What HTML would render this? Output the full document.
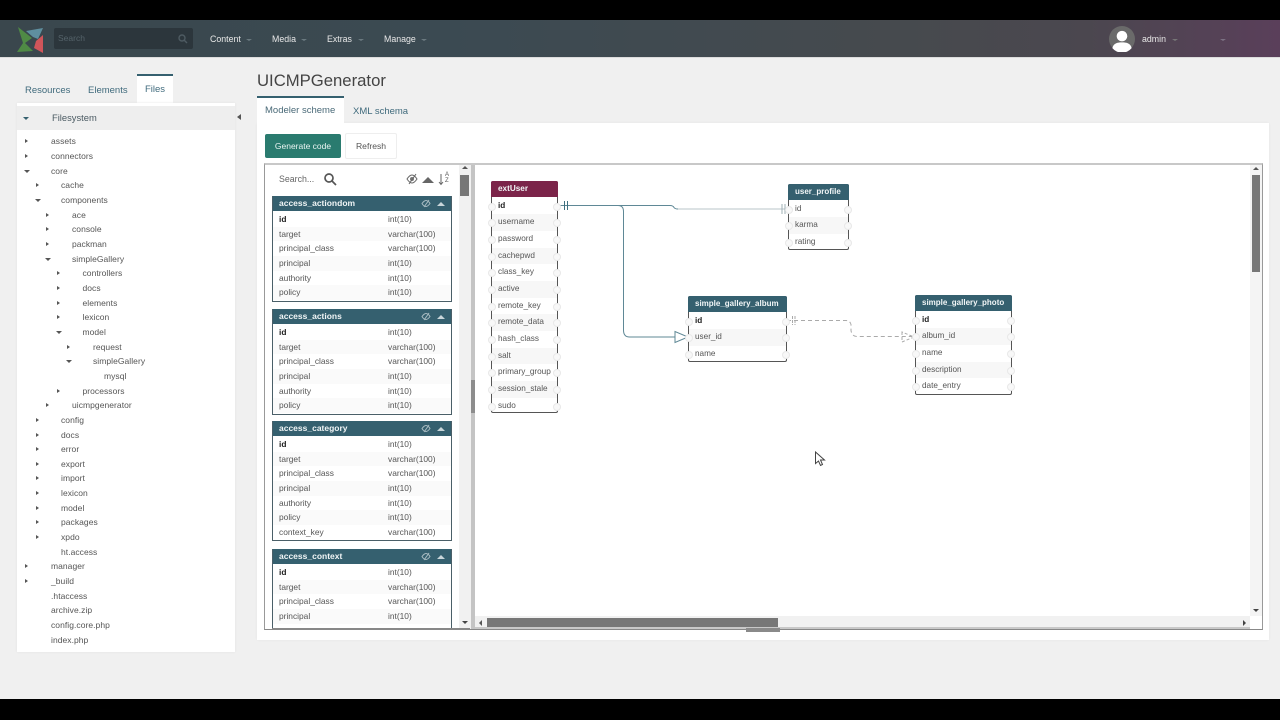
<!DOCTYPE html>
<html><head><meta charset="utf-8"><title>UICMPGenerator</title>
<style>
*{box-sizing:border-box;margin:0;padding:0}
html,body{width:1280px;height:720px;overflow:hidden;background:#f0f0f0;font-family:"Liberation Sans",sans-serif;color:#444}
body{filter:blur(.35px)}
.a{position:absolute}
.blk{position:absolute;left:0;width:1280px;background:#000}
#hd{position:absolute;left:0;top:20px;width:1280px;height:37px;background:linear-gradient(90deg,#3a474d 0%,#3b4a52 35%,#464a4e 70%,#4b474f 85%,#5a3f5a 100%)}
.nav{position:absolute;top:34px;font-size:8.8px;line-height:12px;color:#e8e8e8}
.car{position:absolute;width:0;height:0;border-left:3px solid transparent;border-right:3px solid transparent;border-top:2px solid #6b7a80}
.tab{position:absolute;font-size:9.5px;line-height:14px;color:#3f6a7c}
#tree{position:absolute;left:17px;top:134.4px;width:218px;list-style:none;font-size:8.5px;line-height:14.67px;color:#555;letter-spacing:.05px}
#tree li{position:relative;height:14.67px;white-space:nowrap}
#tree li.r::before,#tree li.d::before{content:"";position:absolute;width:0;height:0}
#tree li.r::before{top:5px;border-top:2.5px solid transparent;border-bottom:2.5px solid transparent;border-left:3.5px solid #555;margin-left:1px}
#tree li.d::before{top:6px;border-left:3px solid transparent;border-right:3px solid transparent;border-top:3.5px solid #555}
.l0{padding-left:34px}.l0::before{left:7px}
.l1{padding-left:44px}.l1::before{left:18px}
.l2{padding-left:55px}.l2::before{left:28px}
.l3{padding-left:65.5px}.l3::before{left:39px}
.l4{padding-left:76px}.l4::before{left:49px}
.l5{padding-left:87px}
.ls{position:absolute;left:272px;width:180px;background:#fff;border:1px solid #4a5f68;border-top:0;overflow:hidden}
.ls h4{background:#35606f;color:#f2f6f7;font-size:8.5px;font-weight:bold;line-height:15px;height:15px;margin:0 -1px;padding-left:7px}
.ct h4{background:#35606f;color:#f2f6f7;font-size:8px;font-weight:bold;white-space:nowrap;padding-left:7px}
.ls p{height:14.65px;line-height:14.65px;font-size:8.4px;color:#555;padding-left:6px;position:relative}
.ls p:first-of-type{margin-top:1px;color:#222;font-weight:bold}
.ls p span{position:absolute;left:115px;top:0;color:#555;font-weight:normal}
.ls p:nth-of-type(even){background:#fafafa}
.ct{position:absolute;background:#fff;border:1px solid #555;border-top:0;border-radius:2px}
.ct h4{height:16px;line-height:16px;border-radius:2px 2px 0 0;margin:0 -1px}
.ct p{height:16.67px;line-height:16.67px;font-size:8.2px;color:#555;padding-left:6px;position:relative;white-space:nowrap}
.ct p:first-of-type{color:#222;font-weight:bold;margin-top:.7px}
.ct p:nth-of-type(even){background:#f7f7f7}
.ct p::before,.ct p::after{content:"";position:absolute;top:5px;width:6px;height:6px;border-radius:50%;background:#f8f8f8;border:1px solid #e8e8e8}
.ct p::before{left:-4px}.ct p::after{right:-4px}
.ct.rose h4{background:#7b2449;font-size:8.2px}
</style></head><body>

<div class="blk" style="top:0;height:20px"></div>
<div class="blk" style="top:699px;height:21px"></div>

<div id="hd"></div>
<div class="a" style="left:0;top:57px;width:1280px;height:1px;background:#dcdcdc"></div>
<svg class="a" style="left:15px;top:24px" width="32" height="30" viewBox="0 0 32 30">
<polygon points="3,3 17,14 10,19 18,27 2,28 8,19" fill="#4f8a45"/>
<polygon points="11,7 28,4 23,15 18,13" fill="#5f8f9f"/>
<polygon points="21,17 28,11 28,29 19,24" fill="#d0555a"/>
</svg>
<div class="a" style="left:54px;top:28px;width:139px;height:21px;background:#2c363c;border-radius:2px"></div>
<div class="nav" style="left:58px;top:32px;font-size:8.5px;color:#55636a">Search</div>
<svg class="a" style="left:177px;top:33px" width="11" height="11" viewBox="0 0 11 11" fill="none" stroke="#4e5b62" stroke-width="1.4"><circle cx="5" cy="5" r="3"/><path d="M7 7l3 3"/></svg>
<div class="nav" style="left:210px;top:33px">Content</div><div class="car" style="left:246px;top:39px"></div>
<div class="nav" style="left:272px;top:33px">Media</div><div class="car" style="left:301px;top:39px"></div>
<div class="nav" style="left:327px;top:33px">Extras</div><div class="car" style="left:358px;top:39px"></div>
<div class="nav" style="left:384px;top:33px">Manage</div><div class="car" style="left:421px;top:39px"></div>
<svg class="a" style="left:1109px;top:26px" width="26" height="26" viewBox="0 0 27 27"><circle cx="13.5" cy="13.500" r="13.500" fill="#6a6a6a"/><circle cx="13.500" cy="10.500" r="5.500" fill="#fff"/><path d="M3.500 23c1-5 5-6 10-6s9 1 10 6a13 13 0 0 1-20 0z" fill="#fff"/></svg>
<div class="nav" style="left:1142px;top:33px;font-size:8.8px">admin</div><div class="car" style="left:1172px;top:39px;border-top-color:#777"></div>
<div class="car" style="left:1220px;top:39px;border-top-color:#7c7284"></div>

<!-- left sidebar -->
<div class="tab" style="left:25px;top:84px">Resources</div>
<div class="tab" style="left:88px;top:84px">Elements</div>
<div class="a" style="left:137px;top:74px;width:36px;height:29px;background:#fff;border-top:2px solid #35606f"></div>
<div class="tab" style="left:145px;top:83px">Files</div>
<div class="a" style="left:17px;top:103px;width:218px;height:549px;background:#fff;box-shadow:0 0 2px #e2e2e2"></div>
<div class="a" style="left:17px;top:106px;width:218px;height:24px;background:#eeeeee"></div>
<div class="a" style="left:23px;top:117px;width:0;height:0;border-left:3px solid transparent;border-right:3px solid transparent;border-top:3.5px solid #35606f"></div>
<div class="a" style="left:52px;top:111px;font-size:9.4px;line-height:14px;color:#4a5a62">Filesystem</div>
<div class="a" style="left:237px;top:114px;width:0;height:0;border-top:3px solid transparent;border-bottom:3px solid transparent;border-right:4px solid #555"></div>
<ul id="tree">
<li class="l0 r">assets</li><li class="l0 r">connectors</li><li class="l0 d">core</li>
<li class="l1 r">cache</li><li class="l1 d">components</li>
<li class="l2 r">ace</li><li class="l2 r">console</li><li class="l2 r">packman</li><li class="l2 d">simpleGallery</li>
<li class="l3 r">controllers</li><li class="l3 r">docs</li><li class="l3 r">elements</li><li class="l3 r">lexicon</li><li class="l3 d">model</li>
<li class="l4 r">request</li><li class="l4 d">simpleGallery</li><li class="l5">mysql</li>
<li class="l3 r">processors</li><li class="l2 r">uicmpgenerator</li>
<li class="l1 r">config</li><li class="l1 r">docs</li><li class="l1 r">error</li><li class="l1 r">export</li><li class="l1 r">import</li><li class="l1 r">lexicon</li><li class="l1 r">model</li><li class="l1 r">packages</li><li class="l1 r">xpdo</li><li class="l1">ht.access</li>
<li class="l0 r">manager</li><li class="l0 r">_build</li><li class="l0">.htaccess</li><li class="l0">archive.zip</li><li class="l0">config.core.php</li><li class="l0">index.php</li>
</ul>

<!-- main -->
<div class="a" style="left:257px;top:71px;font-size:16.700px;line-height:20px;color:#444">UICMPGenerator</div>
<div class="a" style="left:257px;top:123px;width:1012px;height:517px;background:#fff;box-shadow:0 0 2px #e6e6e6"></div>
<div class="a" style="left:257px;top:96px;width:87px;height:28px;background:#fff;border-top:2px solid #35606f"></div>
<div class="tab" style="left:265px;top:104px;color:#4a6a78">Modeler scheme</div>
<div class="tab" style="left:353px;top:105px">XML schema</div>
<div class="a" style="left:265px;top:134px;width:76px;height:24px;background:#2a7b6f;border-radius:2px;color:#eaf4f2;font-size:8.500px;line-height:24px;text-align:center">Generate code</div>
<div class="a" style="left:345px;top:133px;width:52px;height:26px;background:#fff;border:1px solid #eee;border-radius:2px;color:#555;font-size:8.600px;line-height:24px;text-align:center">Refresh</div>

<!-- schema box -->
<div class="a" style="left:264px;top:163px;width:999px;height:467px;background:#fff;border:1px solid #999;border-top:2px solid #c8c8c8;border-bottom-color:#888"></div>
<div class="a" style="left:459px;top:165px;width:12px;height:464px;background:#f1f1f1"></div>
<div class="a" style="left:471px;top:165px;width:4px;height:464px;background:#c4c4c4"></div>
<div class="a" style="left:471px;top:380px;width:4px;height:33px;background:#8c8c8c"></div>
<div class="a" style="left:460px;top:175px;width:9px;height:21px;background:#777"></div>
<div class="a" style="left:462px;top:166px;width:0;height:0;border-left:3px solid transparent;border-right:3px solid transparent;border-bottom:3px solid #555"></div>
<div class="a" style="left:462px;top:621px;width:0;height:0;border-left:3px solid transparent;border-right:3px solid transparent;border-top:3px solid #444"></div>

<div class="a" style="left:279px;top:172px;font-size:8.800px;line-height:14px;color:#666">Search...</div>
<svg class="a" style="left:323px;top:172px" width="14" height="14" viewBox="0 0 14 14" fill="none" stroke="#555" stroke-width="1.7"><circle cx="6" cy="6" r="4"/><path d="M9 9l4 4"/></svg>
<svg class="a" style="left:406px;top:172px" width="46" height="14" viewBox="0 0 46 14"><path d="M1 7c2-3 4-4 5-4s3 1 5 4c-2 3-4 4-5 4s-3-1-5-4z" fill="none" stroke="#666" stroke-width="1"/><circle cx="6" cy="7" r="2" fill="#777"/><path d="M10 2L3 12" stroke="#666" stroke-width="1"/><polygon points="16,11 22,5 28,11" fill="#666"/><path d="M35 2v10M33 10l2 2.500 2-2.500" fill="none" stroke="#666" stroke-width="1"/></svg>
<div class="a" style="left:445px;top:172px;font-size:6px;line-height:6px;color:#555;width:7px">A<br>Z</div>

<div class="ls" style="top:196px;height:106px"><h4>access_actiondom</h4><p>id<span>int(10)</span></p><p>target<span>varchar(100)</span></p><p>principal_class<span>varchar(100)</span></p><p>principal<span>int(10)</span></p><p>authority<span>int(10)</span></p><p>policy<span>int(10)</span></p></div>
<div class="ls" style="top:309px;height:106px"><h4>access_actions</h4><p>id<span>int(10)</span></p><p>target<span>varchar(100)</span></p><p>principal_class<span>varchar(100)</span></p><p>principal<span>int(10)</span></p><p>authority<span>int(10)</span></p><p>policy<span>int(10)</span></p></div>
<div class="ls" style="top:421px;height:120px"><h4>access_category</h4><p>id<span>int(10)</span></p><p>target<span>varchar(100)</span></p><p>principal_class<span>varchar(100)</span></p><p>principal<span>int(10)</span></p><p>authority<span>int(10)</span></p><p>policy<span>int(10)</span></p><p>context_key<span>varchar(100)</span></p></div>
<div class="ls" style="top:549px;height:79px;border-bottom:0"><h4>access_context</h4><p>id<span>int(10)</span></p><p>target<span>varchar(100)</span></p><p>principal_class<span>varchar(100)</span></p><p>principal<span>int(10)</span></p><p>authority<span>int(10)</span></p></div>

<svg class="a" style="left:420px;top:196px" width="30" height="368" viewBox="0 0 30 368" fill="#c9d6da">
<g id="i"><path d="M2 7.500c1.500-2 3-3 4-3s3 1 4 3c-1.500 2-3 3-4 3s-3-1-4-3z" fill="none" stroke="#a9bcc2"/><path d="M9 4L4 11" stroke="#a9bcc2"/><polygon points="17,10 21,6 25,10"/></g>
<use href="#i" y="113"/><use href="#i" y="225"/><use href="#i" y="353"/></svg>

<div class="a" style="left:272px;top:628px;width:198px;height:1px;background:#888"></div>

<!-- canvas -->
<svg class="a" style="left:475px;top:165px" width="780" height="460" viewBox="475 165 780 460" fill="none">
<path d="M559 205.500H670q3 0 4 2q1 1.500 4 1.500H788" stroke="#5f8896"/>
<path d="M678 209H788" stroke="#b9c5c9"/>
<path d="M618 205.500q5.500 0 5.500 6V330q0 7 6 7H675" stroke="#5f8896"/>
<path d="M564.500 201v9M567.500 201v9" stroke="#3f7080"/>
<path d="M782 204v10M785 204v10" stroke="#9fb0b6"/>
<path d="M675 331.500v11l13-5.500z" fill="#fff" stroke="#5f8896"/>
<path d="M787 320.500H846q4 0 5 4v6q1 6 6 6H915" stroke="#aaa" stroke-dasharray="4 3"/>
<path d="M792.500 316v9M795 316v9" stroke="#aaa" stroke-dasharray="3 1"/>
<path d="M902 332v10l12-5z" stroke="#aaa" stroke-dasharray="3 2"/>
</svg>

<div class="ct rose" style="left:491px;top:181px;width:67px;height:232px"><h4>extUser</h4><p>id</p><p>username</p><p>password</p><p>cachepwd</p><p>class_key</p><p>active</p><p>remote_key</p><p>remote_data</p><p>hash_class</p><p>salt</p><p>primary_group</p><p>session_stale</p><p>sudo</p></div>
<div class="ct" style="left:788px;top:184px;width:61px;height:66px"><h4>user_profile</h4><p style="color:#555;font-weight:normal">id</p><p>karma</p><p>rating</p></div>
<div class="ct" style="left:688px;top:296px;width:99px;height:66px"><h4>simple_gallery_album</h4><p>id</p><p>user_id</p><p>name</p></div>
<div class="ct" style="left:915px;top:295px;width:97px;height:100px"><h4>simple_gallery_photo</h4><p>id</p><p>album_id</p><p>name</p><p>description</p><p>date_entry</p></div>

<!-- canvas scrollbars -->
<div class="a" style="left:1250px;top:165px;width:12px;height:451px;background:#f4f4f4"></div>
<div class="a" style="left:1252px;top:175px;width:8px;height:97px;background:#777"></div>
<div class="a" style="left:1253px;top:167px;width:0;height:0;border-left:3px solid transparent;border-right:3px solid transparent;border-bottom:3px solid #555"></div>
<div class="a" style="left:1253px;top:609px;width:0;height:0;border-left:3px solid transparent;border-right:3px solid transparent;border-top:3px solid #444"></div>
<div class="a" style="left:475px;top:616px;width:775px;height:13px;background:#f1f1f1"></div>
<div class="a" style="left:487px;top:618px;width:291px;height:9px;background:#777"></div>
<div class="a" style="left:479px;top:620px;width:0;height:0;border-top:3px solid transparent;border-bottom:3px solid transparent;border-right:3px solid #555"></div>
<div class="a" style="left:1243px;top:620px;width:0;height:0;border-top:3px solid transparent;border-bottom:3px solid transparent;border-left:3px solid #444"></div>
<div class="a" style="left:475px;top:627px;width:775px;height:2px;background:#c8c8c8"></div>
<div class="a" style="left:746px;top:628px;width:34px;height:4px;background:#8a8a8a"></div>

<svg class="a" style="left:814px;top:451px" width="12" height="16" viewBox="0 0 12 16"><path d="M1.500 1v11.500l3-2.500 2 4.500 2-1-2-4.500h4z" fill="#fff" stroke="#444"/></svg>
</body></html>
